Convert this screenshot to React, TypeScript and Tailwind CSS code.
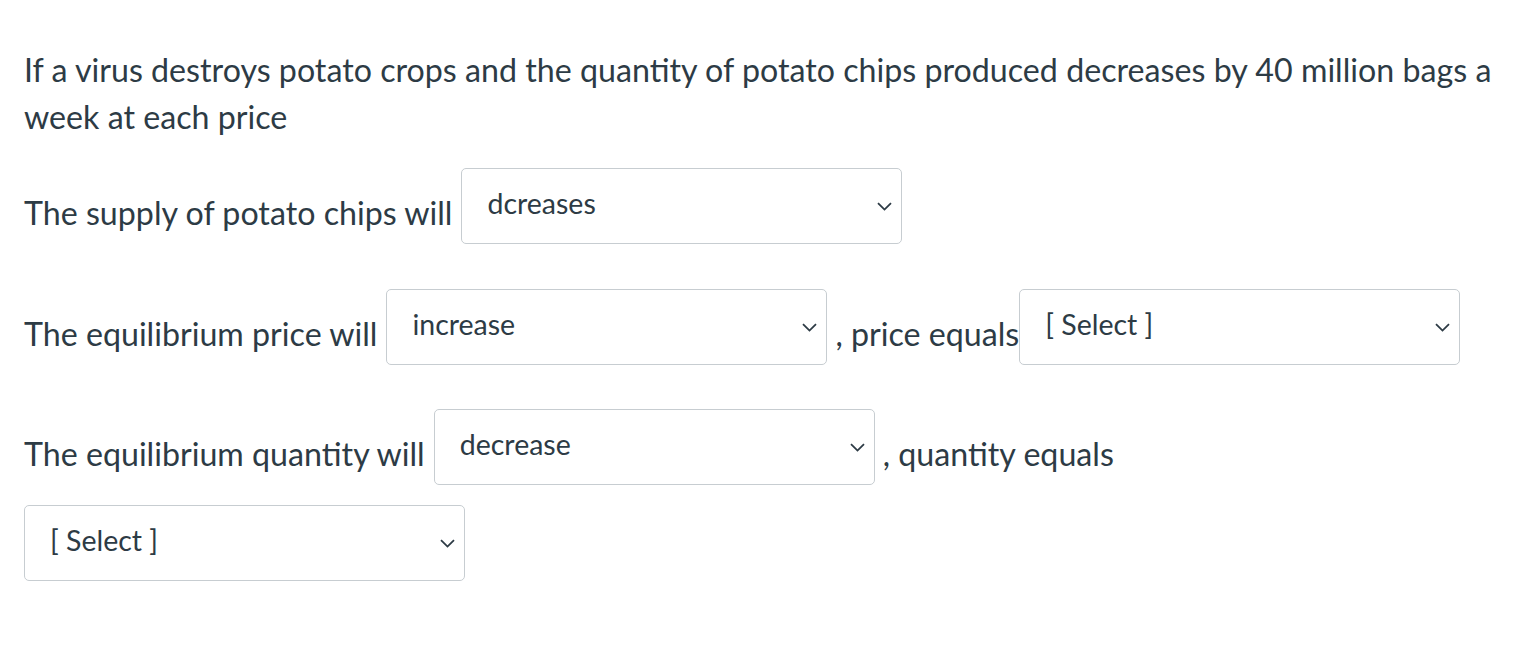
const Chevron = () => (
  <svg width="15" height="9" viewBox="0 0 15 9" fill="none" className="shrink-0">
    <path d="M1 1.2 L7.5 7.6 L14 1.2" stroke="#2d3b45" strokeWidth="1.8" />
  </svg>
);

const Dropdown = ({ value }: { value: string }) => (
  <div className="flex h-[76px] w-[441px] shrink-0 items-center justify-between rounded-[5px] border border-[#c7cdd1] bg-white pl-[25px] pr-[9px]">
    <span className="pb-[6px] text-[28.5px] leading-[34px]">{value}</span>
    <Chevron />
  </div>
);

const Label = ({ children, className = "" }: { children: string; className?: string }) => (
  <span className={`whitespace-pre pt-[12px] ${className}`}>{children}</span>
);

export default function App() {
  return (
    <div
      className="min-h-screen bg-white pl-[24px] pr-[20px] pt-[46px] text-[32.2px] leading-[47px] text-[#2d3b45]"
      style={{ fontFamily: "Lato, 'Liberation Sans', sans-serif" }}
    >
      <p>
        If a virus destroys potato crops and the quantity of potato chips produced decreases by 40 million bags a week at each price
      </p>

      <div className="mt-[28px] flex items-center">
        <Label className="mr-[9px]">The supply of potato chips will</Label>
        <Dropdown value="dcreases" />
      </div>

      <div className="mt-[45px] flex items-center">
        <Label className="mr-[9px]">The equilibrium price will</Label>
        <Dropdown value="increase" />
        <Label className="ml-[8px]">, price equals</Label>
        <Dropdown value="[ Select ]" />
      </div>

      <div className="mt-[44px] flex items-center">
        <Label className="mr-[9px]">The equilibrium quantity will</Label>
        <Dropdown value="decrease" />
        <Label className="ml-[8px]">, quantity equals</Label>
      </div>

      <div className="mt-[20px] flex">
        <Dropdown value="[ Select ]" />
      </div>
    </div>
  );
}
